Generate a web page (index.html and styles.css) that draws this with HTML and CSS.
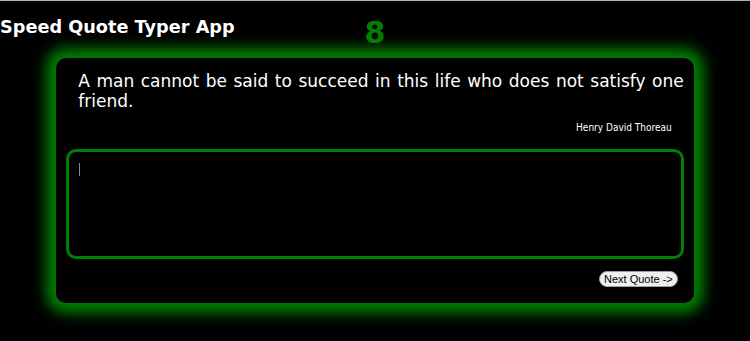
FILE: index.html
```html
<!DOCTYPE html>
<html lang="en">
<head>
<meta charset="utf-8">
<title>Speed Quote Typer App</title>
<link rel="stylesheet" href="styles.css">
</head>
<body>
<header class="header">
  <h1 class="title">Speed Quote Typer App</h1>
  <div class="timer">8</div>
</header>
<main class="card">
  <p class="quote">A man cannot be said to succeed in this life who does not satisfy one friend.</p>
  <p class="author">Henry David Thoreau</p>
  <div class="input-wrap">
    <textarea class="input" autofocus></textarea>
    <span class="caret"></span>
  </div>
  <div class="actions">
    <button class="next-btn">Next Quote -&gt;</button>
  </div>
</main>
</body>
</html>
```
FILE: styles.css
```css
html, body {
  margin: 0;
  padding: 0;
  background: #000;
}
body {
  border-top: 1px solid #b4b4b4;
  color: #fff;
  font-family: "DejaVu Sans", Verdana, sans-serif;
  min-height: 340px;
}
.header {
  display: grid;
  grid-template-columns: 1fr auto 1fr;
  align-items: start;
  margin-top: 14px;
}
.title {
  margin: 2px 0 0 0;
  font-size: 17.7px;
  font-weight: bold;
  line-height: 20px;
  color: #fff;
}
.timer {
  font-size: 30px;
  font-weight: bold;
  color: #008000;
  line-height: 35px;
}
.card {
  width: 85%;
  margin: 8px auto 0;
  box-sizing: border-box;
  padding: 10px;
  background: #000;
  border-radius: 10px;
  box-shadow: 0 0 14px 10px #008000;
}
.quote {
  margin: 3px 0 0 12px;
  font-size: 17px;
  line-height: 20px;
  text-align: justify;
  color: #fff;
}
.author {
  margin: 11px 12px 0 0;
  font-family: "DejaVu Sans Condensed", "DejaVu Sans", sans-serif;
  font-stretch: condensed;
  font-size: 10px;
  line-height: 12px;
  text-align: right;
  color: #fff;
}
.input-wrap {
  position: relative;
  margin-top: 15px;
}
.input {
  display: block;
  width: 100%;
  height: 110px;
  box-sizing: border-box;
  padding: 10px;
  background: #000;
  color: #fff;
  caret-color: #8a8a8a;
  border: 3px solid #008000;
  border-radius: 10px;
  font-family: "DejaVu Sans", sans-serif;
  font-size: 13px;
  resize: none;
  outline: none;
}
.caret {
  position: absolute;
  left: 13px;
  top: 14px;
  width: 1px;
  height: 13px;
  background: #8a8a8a;
}
.actions {
  display: flex;
  justify-content: flex-end;
  margin-top: 12px;
  margin-bottom: 6px;
}
.next-btn {
  margin-right: 6px;
  padding: 0 4px;
  height: 16px;
  background: #efefef;
  color: #000;
  border: 1px solid #a0a0a0;
  border-radius: 9px;
  font-family: "Liberation Sans", Arial, sans-serif;
  font-size: 11px;
  line-height: 14px;
}
```
